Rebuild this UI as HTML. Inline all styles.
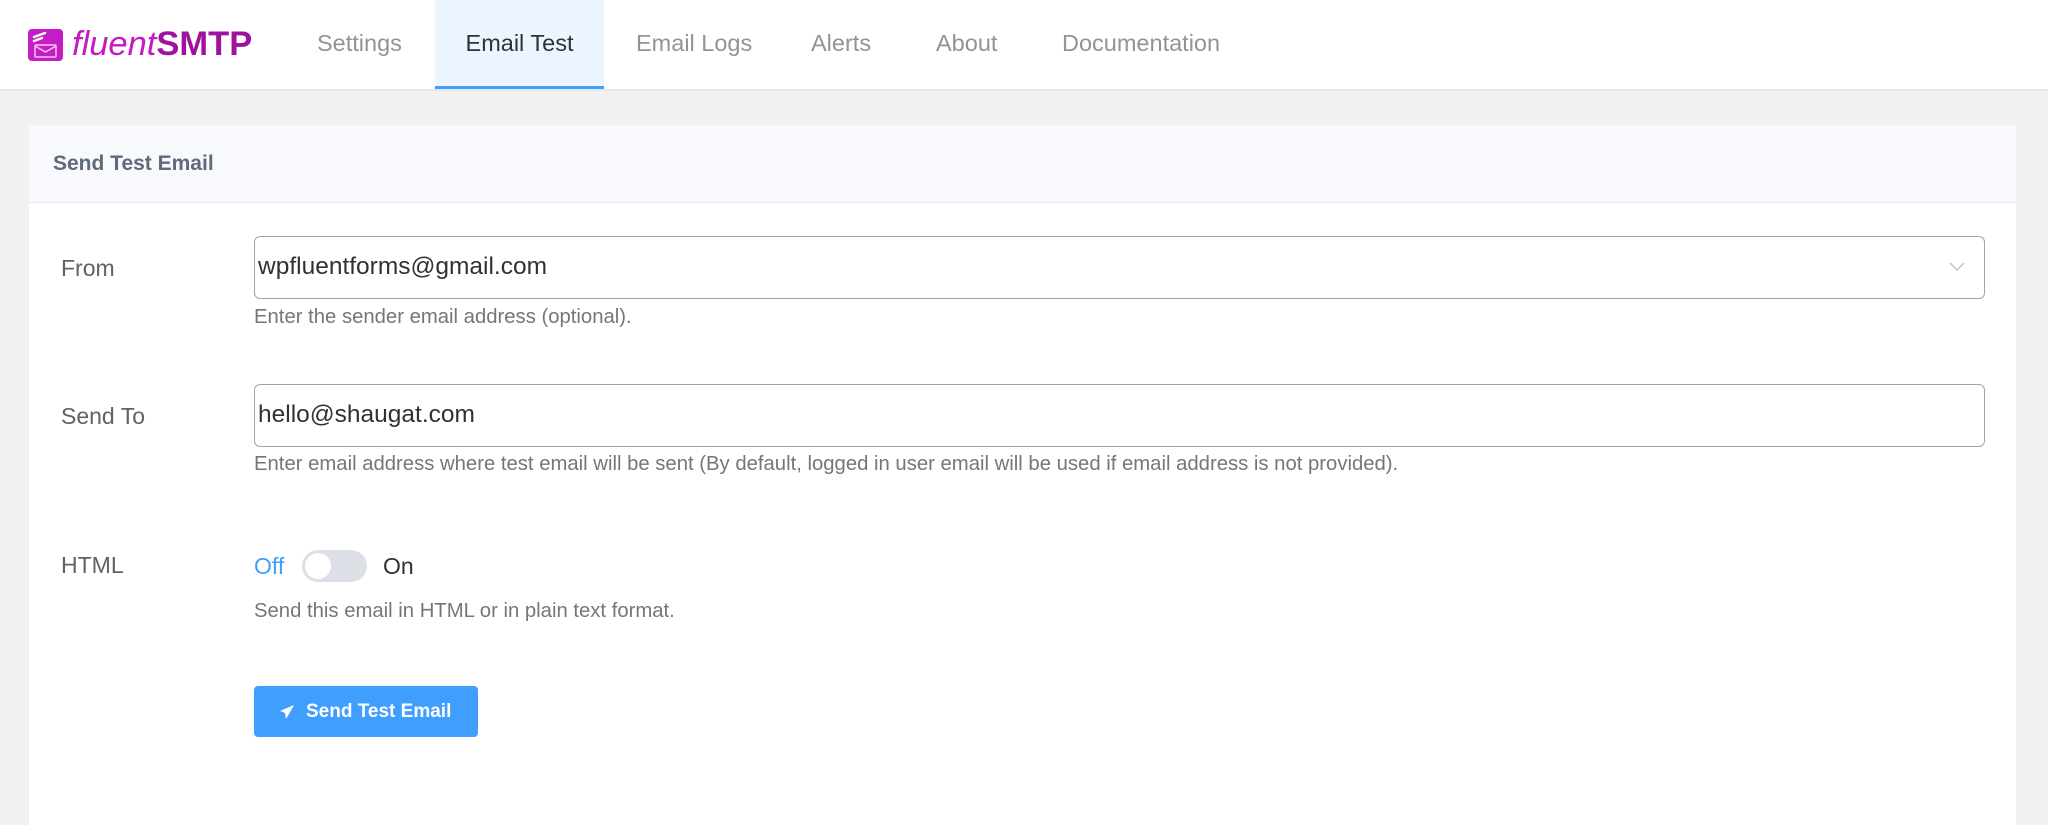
<!DOCTYPE html>
<html><head><meta charset="utf-8"><style>
*{box-sizing:border-box;margin:0;padding:0}
body{width:2048px;height:803px;overflow:hidden;background:#f1f1f1;font-family:"Liberation Sans",sans-serif;position:relative}
.hdr{position:absolute;left:0;top:0;width:2048px;height:91px;background:#fff;border-bottom:2px solid #e4e7ed}
.logo{position:absolute;left:28px;top:29px;width:35px;height:32px;background:#c51cc5;border-radius:4px}
.lt{position:absolute;left:72px;top:24px;font-size:34.5px;line-height:40px}
.nav{position:absolute;top:0;height:89px;line-height:86px;font-size:23.5px;color:#909399}
.act{background:#ecf5ff;color:#303133;border-bottom:3px solid #409eff;text-align:center}
.card{position:absolute;left:29px;top:125px;width:1987px;height:700px;background:#fff}
.ch{height:78px;background:#f7f9fc;border-bottom:1px solid #e4e7ed;padding-left:24px;line-height:78px;font-weight:bold;font-size:21px;color:#606a7b}
.lbl{position:absolute;left:61px;font-size:23px;color:#606266}
.inp{position:absolute;left:254px;width:1731px;height:63px;border:1.5px solid #a0a4ab;border-radius:6px;font-size:24.5px;color:#303133;padding-left:3px;line-height:60px;background:#fff}
.help{position:absolute;left:254px;font-size:20.3px;color:#73767c}
</style></head><body>
<div class="hdr">
 <div class="logo"><svg width="35" height="32" viewBox="0 0 35 32"><path d="M6 8 L17 4 M6 12 L14 9" stroke="#fff" stroke-width="2.5" stroke-linecap="round" fill="none"/><rect x="7" y="16" width="21" height="12" rx="1" stroke="#f3c6f3" stroke-width="1.5" fill="none"/><path d="M7 17 L17.5 23 L28 17" stroke="#f3c6f3" stroke-width="1.5" fill="none"/></svg></div>
 <div class="lt"><span style="font-style:italic;color:#c21bc2;font-weight:300">fluent</span><span style="font-weight:bold;color:#a0129c">SMTP</span></div>
 <div class="nav" style="left:317px">Settings</div>
 <div class="nav act" style="left:435px;width:169px">Email Test</div>
 <div class="nav" style="left:636px">Email Logs</div>
 <div class="nav" style="left:811px">Alerts</div>
 <div class="nav" style="left:936px">About</div>
 <div class="nav" style="left:1062px">Documentation</div>
</div>
<div class="card"><div class="ch">Send Test Email</div></div>
<div class="lbl" style="top:255px">From</div>
<div class="inp" style="top:236px">wpfluentforms@gmail.com<svg style="position:absolute;right:18px;top:24px" width="18" height="12" viewBox="0 0 18 12"><path d="M2 2 L9 9 L16 2" stroke="#c0c4cc" stroke-width="1.5" fill="none"/></svg></div>
<div class="help" style="top:306px">Enter the sender email address (optional).</div>
<div class="lbl" style="top:403px">Send To</div>
<div class="inp" style="top:384px">hello@shaugat.com</div>
<div class="help" style="top:453px">Enter email address where test email will be sent (By default, logged in user email will be used if email address is not provided).</div>
<div class="lbl" style="top:552px">HTML</div>
<div style="position:absolute;left:254px;top:553px;font-size:23px;color:#409eff">Off</div>
<div style="position:absolute;left:302px;top:550px;width:65px;height:32px;border-radius:16px;background:#dcdfe6"><div style="position:absolute;left:3px;top:3px;width:26px;height:26px;border-radius:13px;background:#fff"></div></div>
<div style="position:absolute;left:383px;top:553px;font-size:23px;color:#303133">On</div>
<div class="help" style="top:600px">Send this email in HTML or in plain text format.</div>
<div style="position:absolute;left:254px;top:686px;width:224px;height:51px;background:#409eff;border-radius:4px;color:#fff;font-weight:bold;font-size:19px;line-height:51px;padding-left:52px"><svg style="position:absolute;left:25px;top:18px" width="16" height="16" viewBox="0 0 16 16"><path d="M15 1 L1 7 L6 9 L7 15 L10 10 Z" fill="#fff"/></svg>Send Test Email</div>
</body></html>
